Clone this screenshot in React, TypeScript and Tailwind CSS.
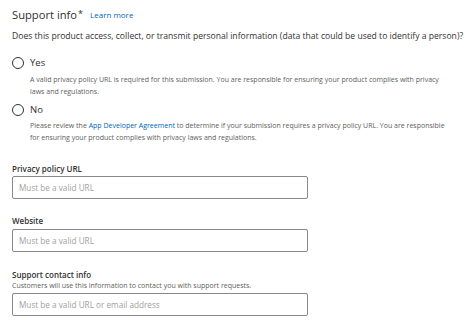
import React from 'react';

function Radio({ label }: { label: string }) {
    return (
        <div className="flex items-center h-[14px]">
            <span className="h-[12px] w-[12px] rounded-full border border-[#323130] bg-white shrink-0" />
            <span className="ml-[6px] text-[9.5px] leading-[14px] text-[#323130]">{label}</span>
        </div>
    );
}

function Field({ placeholder }: { placeholder: string }) {
    return (
        <input
            placeholder={placeholder}
            className="block w-[296px] h-[23px] border border-[#8a8886] rounded-[2px] px-[6px] text-[8.2px] text-[#323130] placeholder:text-[#a19f9d] outline-none bg-white"
        />
    );
}

export default function App() {
    return (
        <div className="w-[474px] h-[325px] bg-white px-[12px] pt-[5px] overflow-hidden text-[#323130]" style={{ fontFamily: '"Open Sans", "Noto Sans", sans-serif' }}>
            <div className="flex items-center h-[20px]">
                <span className="text-[11.2px] leading-[20px] text-[#323130]">Support info</span>
                <span className="text-[9px] leading-[10px] ml-[1px] self-start mt-[4px]">*</span>
                <a className="ml-[7px] text-[8px] leading-[20px] text-[#0067b8]">Learn more</a>
            </div>

            <p className="mt-[4px] text-[8.6px] leading-[14px] whitespace-nowrap">
                Does this product access, collect, or transmit personal information (data that could be used to identify a person)?
            </p>

            {/* Yes */}
            <div className="mt-[13px]">
                <Radio label="Yes" />
            </div>
            <p className="mt-[4px] pl-[18px] text-[7px] leading-[12px] text-[#605e5c] whitespace-nowrap">
                A valid privacy policy URL is required for this submission. You are responsible for ensuring your product complies with privacy
                <br />
                laws and regulations.
            </p>

            {/* No */}
            <div className="mt-[5px]">
                <Radio label="No" />
            </div>
            <p className="mt-[3px] pl-[18px] text-[7px] leading-[12px] text-[#605e5c] whitespace-nowrap">
                Please review the <a className="text-[#0067b8]">App Developer Agreement</a> to determine if your submission requires a privacy policy URL. You are responsible
                <br />
                for ensuring your product complies with privacy laws and regulations.
            </p>

            <label className="block mt-[18px] text-[8px] leading-[14px] font-semibold">Privacy policy URL</label>
            <Field placeholder="Must be a valid URL" />

            <label className="block mt-[15px] text-[8px] leading-[14px] font-semibold">Website</label>
            <div className="mt-[1px]">
                <Field placeholder="Must be a valid URL" />
            </div>

            <label className="block mt-[17px] text-[8px] leading-[12px] font-semibold">Support contact info</label>
            <p className="text-[7px] leading-[10px] text-[#605e5c]">Customers will use this information to contact you with support requests.</p>
            <div className="mt-[2px]">
                <Field placeholder="Must be a valid URL or email address" />
            </div>
        </div>
    );
}
